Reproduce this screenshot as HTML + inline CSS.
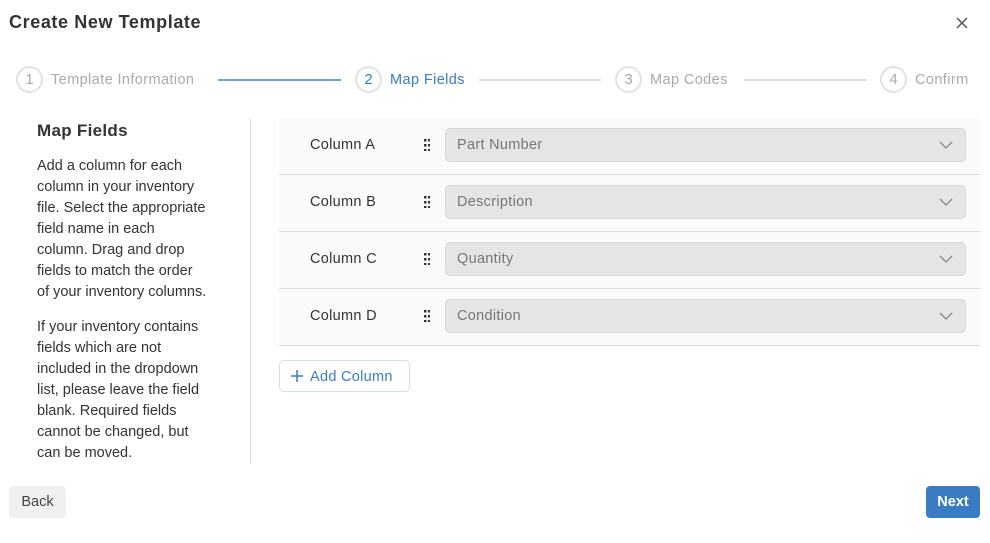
<!DOCTYPE html>
<html><head><style>
*{box-sizing:border-box;margin:0;padding:0}
body{width:990px;height:543px;background:#fff;font-family:"Liberation Sans",sans-serif;position:relative;overflow:hidden;color:#333}
h1{position:absolute;left:9px;top:12px;font-size:18px;font-weight:bold;color:#333;letter-spacing:0.6px}
.close{position:absolute;left:954px;top:15px}
.step{position:absolute;top:66px;height:27px;display:flex;align-items:center;font-size:14.5px;color:#aaa;letter-spacing:0.4px}
.circ{width:27px;height:27px;border-radius:50%;border:2px solid #e2e2e2;display:flex;align-items:center;justify-content:center;font-size:15px;margin-right:8px;color:#aaa;letter-spacing:0}
.line{position:absolute;top:79px;height:2px;background:#ddd}
.left{position:absolute;left:37px;top:120px;width:215px;font-size:14.5px;line-height:21px;color:#333;white-space:nowrap}
.left h2{font-size:17px;font-weight:bold;margin-bottom:12px;line-height:22px;letter-spacing:0.3px}
.vline{position:absolute;left:250px;top:118px;width:1px;height:346px;background:#ddd}
.row{position:absolute;left:279px;width:701px;height:57px;background:#fafafa;border-bottom:1px solid #ddd}
.row .lbl{position:absolute;left:31px;top:19px;font-size:14.5px;color:#333;letter-spacing:0.3px}
.row .drag{position:absolute;left:145px;top:21px}
.sel{position:absolute;left:166px;top:10px;width:521px;height:34px;background:#e5e5e5;border:1px solid #d8d8d8;border-radius:5px;font-size:14.5px;color:#777;padding:8px 11px;letter-spacing:0.3px}
.sel svg{position:absolute;right:12px;top:12px}
.add{position:absolute;left:279px;top:360px;width:131px;height:32px;border:1px solid #c9e0f5;border-radius:5px;color:#3a7cc4;font-size:14.5px;padding:8px 0 0 30px;letter-spacing:0.3px}
.btn{position:absolute;top:486px;height:32px;border-radius:4px;font-size:14.5px;display:flex;align-items:center;justify-content:center}
</style></head><body>
<h1>Create New Template</h1>
<svg class="close" width="16" height="16" viewBox="0 0 16 16"><path d="M3 3L13 13M13 3L3 13" stroke="#555" stroke-width="1.5"/></svg>

<div class="step" style="left:16px"><div class="circ">1</div>Template Information</div>
<div class="line" style="left:218px;width:123px;background:#6fa4dc"></div>
<div class="step" style="left:355px;color:#3a7cc4"><div class="circ" style="color:#3a7cc4">2</div>Map Fields</div>
<div class="line" style="left:479px;width:122px"></div>
<div class="step" style="left:615px"><div class="circ">3</div>Map Codes</div>
<div class="line" style="left:744px;width:122px"></div>
<div class="step" style="left:880px"><div class="circ">4</div>Confirm</div>

<div class="left"><h2>Map Fields</h2>
<p style="margin-top:14px">Add a column for each<br>column in your inventory<br>file. Select the appropriate<br>field name in each<br>column. Drag and drop<br>fields to match the order<br>of your inventory columns.</p>
<p style="margin-top:14px">If your inventory contains<br>fields which are not<br>included in the dropdown<br>list, please leave the field<br>blank. Required fields<br>cannot be changed, but<br>can be moved.</p></div>
<div class="vline"></div>

<div class="row" style="top:118px"><span class="lbl">Column A</span><svg class="drag" width="6" height="12"><g fill="#333"><rect x="0" y="0" width="2.5" height="2.5"/><rect x="4" y="0" width="2.5" height="2.5"/><rect x="0" y="5" width="2.5" height="2.5"/><rect x="4" y="5" width="2.5" height="2.5"/><rect x="0" y="10" width="2.5" height="2.5"/><rect x="4" y="10" width="2.5" height="2.5"/></g></svg><div class="sel">Part Number<svg width="14" height="8"><path d="M1 1L7 7L13 1" stroke="#888" fill="none" stroke-width="1.3"/></svg></div></div>
<div class="row" style="top:175px"><span class="lbl">Column B</span><svg class="drag" width="6" height="12"><g fill="#333"><rect x="0" y="0" width="2.5" height="2.5"/><rect x="4" y="0" width="2.5" height="2.5"/><rect x="0" y="5" width="2.5" height="2.5"/><rect x="4" y="5" width="2.5" height="2.5"/><rect x="0" y="10" width="2.5" height="2.5"/><rect x="4" y="10" width="2.5" height="2.5"/></g></svg><div class="sel">Description<svg width="14" height="8"><path d="M1 1L7 7L13 1" stroke="#888" fill="none" stroke-width="1.3"/></svg></div></div>
<div class="row" style="top:232px"><span class="lbl">Column C</span><svg class="drag" width="6" height="12"><g fill="#333"><rect x="0" y="0" width="2.5" height="2.5"/><rect x="4" y="0" width="2.5" height="2.5"/><rect x="0" y="5" width="2.5" height="2.5"/><rect x="4" y="5" width="2.5" height="2.5"/><rect x="0" y="10" width="2.5" height="2.5"/><rect x="4" y="10" width="2.5" height="2.5"/></g></svg><div class="sel">Quantity<svg width="14" height="8"><path d="M1 1L7 7L13 1" stroke="#888" fill="none" stroke-width="1.3"/></svg></div></div>
<div class="row" style="top:289px"><span class="lbl">Column D</span><svg class="drag" width="6" height="12"><g fill="#333"><rect x="0" y="0" width="2.5" height="2.5"/><rect x="4" y="0" width="2.5" height="2.5"/><rect x="0" y="5" width="2.5" height="2.5"/><rect x="4" y="5" width="2.5" height="2.5"/><rect x="0" y="10" width="2.5" height="2.5"/><rect x="4" y="10" width="2.5" height="2.5"/></g></svg><div class="sel">Condition<svg width="14" height="8"><path d="M1 1L7 7L13 1" stroke="#888" fill="none" stroke-width="1.3"/></svg></div></div>

<div class="add"><svg style="position:absolute;left:11px;top:9px" width="12" height="12"><path d="M6 0V12M0 6H12" stroke="#3a7cc4" stroke-width="1.5"/></svg>Add Column</div>

<div class="btn" style="left:9px;width:57px;background:#f0f0f0;color:#444">Back</div>
<div class="btn" style="left:926px;width:54px;background:#3a7cc4;color:#fff;font-weight:bold">Next</div>
</body></html>
